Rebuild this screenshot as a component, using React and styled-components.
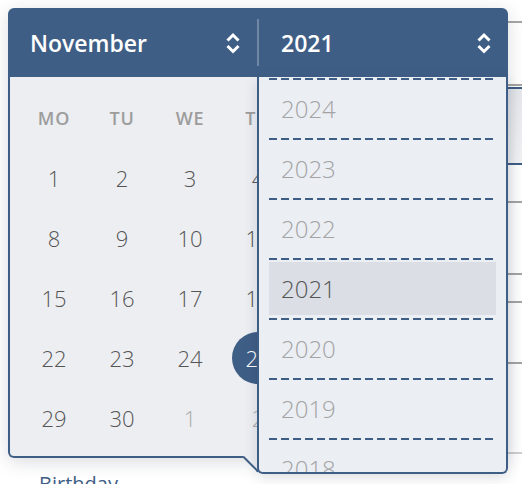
import React from "react";
import styled, { createGlobalStyle } from "styled-components";

const BLUE = "#3f5e86";

const GlobalStyle = createGlobalStyle`
  html, body {
    margin: 0;
    padding: 0;
    background: #ffffff;
  }
  body {
    font-family: "Open Sans", "Liberation Sans", sans-serif;
  }
`;

const weekdays = ["MO", "TU", "WE", "TH", "FR", "SA", "SU"];

const weeks = [
  [1, 2, 3, 4, 5, 6, 7],
  [8, 9, 10, 11, 12, 13, 14],
  [15, 16, 17, 18, 19, 20, 21],
  [22, 23, 24, 25, 26, 27, 28],
  [29, 30, "1n", "2n", "3n", "4n", "5n"],
];

const years = [2024, 2023, 2022, 2021, 2020, 2019, 2018, 2017, 2016];

// rows of the form that sits behind the picker
const backdropRows = [
  { h: 23 },
  { h: 63 },
  { active: true },
  { h: 38 },
  { h: 72 },
  { h: 28 },
  { h: 61 },
  { h: 90, light: true },
];

function Chevrons() {
  return (
    <svg width="16" height="24" viewBox="0 0 16 24" fill="none">
      <polyline points="2.5,9.5 8,4 13.5,9.5" stroke="#fff" strokeWidth="3" />
      <polyline points="2.5,15 8,20.5 13.5,15" stroke="#fff" strokeWidth="3" />
    </svg>
  );
}

export default function App() {
  return (
    <Page>
      <GlobalStyle />
      <Backdrop>
        {backdropRows.map((r, i) =>
          r.active ? <ActiveRow key={i} /> : <Rule key={i} h={r.h} light={r.light} />
        )}
        <Label>Birthday</Label>
      </Backdrop>

      <Popup>
        <Header>
          <Select>
            <span>November</span>
            <Chevrons />
          </Select>
          <HeaderDivider />
          <Select>
            <span>2021</span>
            <Chevrons />
          </Select>
        </Header>

        <Body>
          <Grid>
            {weekdays.map((d) => (
              <Weekday key={d}>{d}</Weekday>
            ))}
            {weeks.flat().map((d) => {
              const muted = typeof d === "string";
              return (
                <Cell key={d}>
                  <Day $muted={muted} $selected={d === 25}>
                    {muted ? parseInt(d, 10) : d}
                  </Day>
                </Cell>
              );
            })}
          </Grid>
          <Tail />
        </Body>

        <YearMenu>
          {years.map((y) => (
            <React.Fragment key={y}>
              <Dash />
              <YearOption $selected={y === 2021}>{y}</YearOption>
            </React.Fragment>
          ))}
        </YearMenu>
      </Popup>
    </Page>
  );
}

const Page = styled.div`
  position: relative;
  width: 522px;
  height: 484px;
  overflow: hidden;
`;

const Backdrop = styled.div`
  display: flex;
  flex-direction: column;
  padding-left: 30px;
`;

const Rule = styled.div`
  box-sizing: border-box;
  height: ${(p) => p.h}px;
  border-bottom: 2px solid ${(p) => (p.light ? "#cfcfcf" : "#a5a5a5")};
`;

const ActiveRow = styled.div`
  box-sizing: border-box;
  height: 78px;
  margin-top: 1px;
  border-top: 2px solid ${BLUE};
  border-bottom: 2px solid ${BLUE};
  background: linear-gradient(#e6e8ec, #f2f3f5);
`;

const Label = styled.div`
  margin-top: 18px;
  padding-left: 9px;
  font-size: 20px;
  line-height: 24px;
  color: ${BLUE};
`;

const Popup = styled.div`
  position: absolute;
  top: 8px;
  left: 8px;
  width: 500px;
  border-radius: 6px;
  box-shadow: 0 4px 18px rgba(30, 40, 60, 0.16);
`;

const Header = styled.div`
  display: flex;
  height: 69px;
  background: ${BLUE};
  border-radius: 6px 6px 0 0;
`;

const Select = styled.div`
  flex: 1;
  display: flex;
  align-items: center;
  justify-content: space-between;
  padding: 0 16px 0 22px;
  color: #ffffff;
  font-size: 23px;
  font-weight: 600;
`;

const HeaderDivider = styled.div`
  width: 2px;
  height: 47px;
  align-self: center;
  background: rgba(255, 255, 255, 0.25);
`;

const Body = styled.div`
  position: relative;
  background: #eceef2;
  border: 2px solid ${BLUE};
  border-top: none;
  border-radius: 0 0 6px 6px;
  padding: 11px 10px 8px;
`;

const Grid = styled.div`
  display: grid;
  grid-template-columns: repeat(7, 68px);
  grid-auto-rows: 60px;
  align-items: center;
  justify-items: center;
`;

const Weekday = styled.div`
  font-size: 18px;
  font-weight: 600;
  letter-spacing: 0.8px;
  color: #9d9d9d;
`;

const Cell = styled.div`
  display: flex;
  align-items: center;
  justify-content: center;
`;

const Day = styled.div`
  width: 52px;
  height: 52px;
  border-radius: 50%;
  display: flex;
  align-items: center;
  justify-content: center;
  font-size: 22px;
  font-weight: 300;
  color: ${(p) => (p.$selected ? "#ffffff" : p.$muted ? "#ababab" : "#555555")};
  background: ${(p) => (p.$selected ? BLUE : "transparent")};
`;

const Tail = styled.div`
  position: absolute;
  left: 50%;
  bottom: -12px;
  width: 21px;
  height: 21px;
  margin-left: -11px;
  box-sizing: border-box;
  background: #eceef2;
  border-right: 2px solid ${BLUE};
  border-bottom: 2px solid ${BLUE};
  transform: rotate(45deg);
`;

const YearMenu = styled.div`
  position: absolute;
  top: 69px;
  left: 249px;
  width: 251px;
  height: 397px;
  box-sizing: border-box;
  padding-top: 1px;
  background: #ebeef3;
  border: 2px solid ${BLUE};
  border-top: none;
  border-radius: 0 0 6px 6px;
  overflow: hidden;
  box-shadow: 0 4px 14px rgba(30, 40, 60, 0.14);
`;

const Dash = styled.div`
  height: 2px;
  margin: 0 10px;
  background: repeating-linear-gradient(
    to right,
    ${BLUE} 0 8px,
    transparent 8px 12px
  );
`;

const YearOption = styled.div`
  height: 58px;
  box-sizing: border-box;
  margin: 0 10px;
  padding: 2px 0 3px;
  background-clip: content-box;
  background-color: ${(p) => (p.$selected ? "#dbdfe5" : "transparent")};
  line-height: 53px;
  text-indent: 12px;
  font-size: 24px;
  font-weight: 300;
  color: ${(p) => (p.$selected ? "#555555" : "#a3a3a3")};
`;
